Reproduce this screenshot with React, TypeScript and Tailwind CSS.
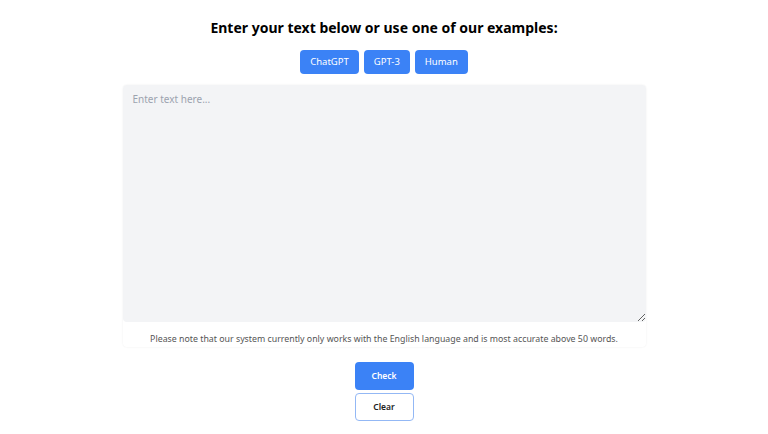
import React, { useState } from "react";

export default function App() {
  const [text, setText] = useState("");

  return (
    <div className="min-h-screen bg-white font-['Noto_Sans',sans-serif] flex flex-col items-center pt-[17px]">
      <h1 className="text-[14px] leading-[22px] font-bold text-black">
        Enter your text below or use one of our examples:
      </h1>
      <div className="flex gap-[5px] mt-[11px]">
        {["ChatGPT", "GPT-3", "Human"].map((label) => (
          <button
            key={label}
            className="h-[24px] px-[10px] rounded-[4px] bg-[#3b82f6] text-white text-[9.5px]"
          >
            {label}
          </button>
        ))}
      </div>
      <div className="w-[523px] mt-[11px] rounded-[4px] shadow-[0_0_2px_rgba(0,0,0,0.08)] flex flex-col">
        <textarea
          value={text}
          onChange={(e) => setText(e.target.value)}
          placeholder="Enter text here..."
          className="h-[237px] w-full bg-[#f3f4f6] rounded-[4px] px-[10px] py-[7px] text-[10px] text-gray-700 placeholder:text-[#9ca3af] focus:outline-none"
        />
        <p className="h-[25px] flex items-end justify-center pb-[1px] text-[8.8px] text-[#555]">
          Please note that our system currently only works with the English language and is most accurate above 50 words.
        </p>
      </div>
      <button className="mt-[15px] w-[59px] h-[28px] rounded-[4px] bg-[#3b82f6] text-white text-[8.5px] font-semibold">
        Check
      </button>
      <button className="mt-[3px] w-[59px] h-[28px] rounded-[4px] bg-white border border-[#93b8f5] text-[#222] text-[8.5px] font-semibold">
        Clear
      </button>
    </div>
  );
}
